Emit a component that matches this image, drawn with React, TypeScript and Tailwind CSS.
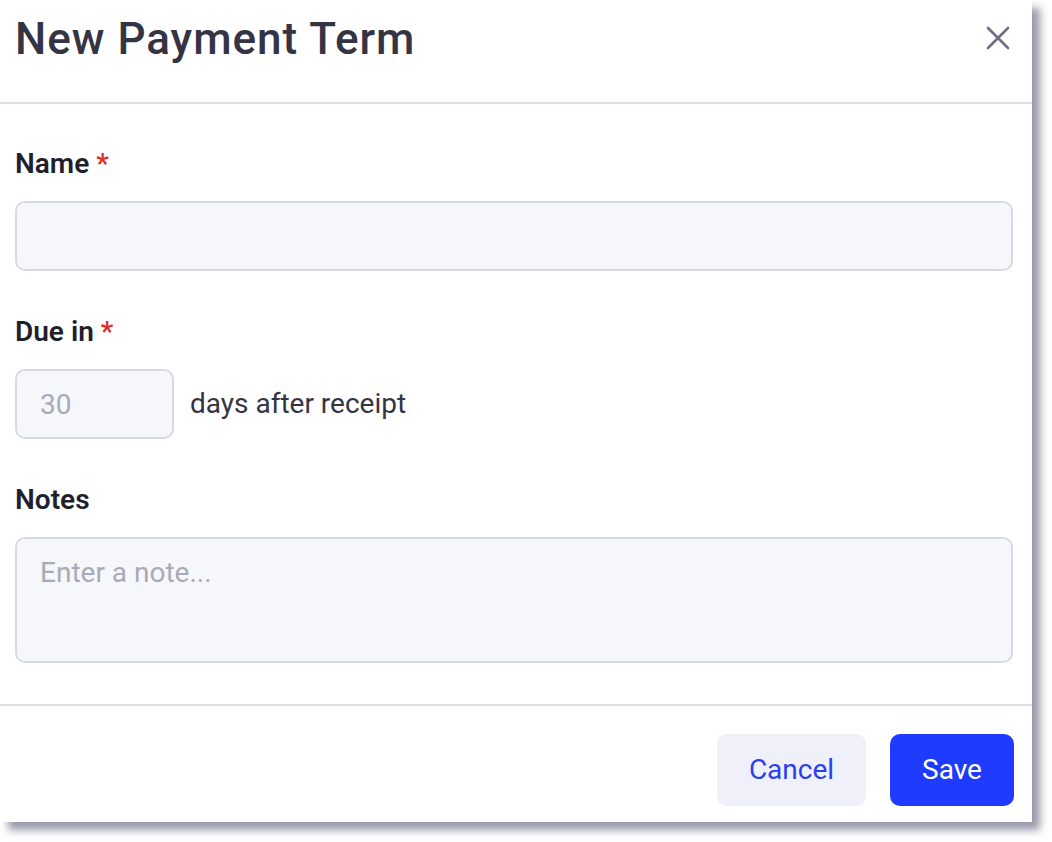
import React from "react";

export default function App() {
  return (
    <div className="w-[1052px] h-[842px] bg-white" style={{ fontFamily: "Roboto, 'Liberation Sans', sans-serif" }}>
      <div className="w-[1032px] h-[822px] bg-white flex flex-col shadow-[8px_8px_8px_rgba(70,70,100,0.55)]">
        <div className="h-[104px] shrink-0 border-b-2 border-[#dcdce6] flex justify-between pl-[15px] pr-[22px]">
          <h1 className="mt-[13px] text-[44px] leading-[52px] font-medium tracking-[1px] text-[#343445]">New Payment Term</h1>
          <button className="mt-[26px] w-[24px] h-[24px] flex items-center justify-center text-[#6e6e80]">
            <svg width="24" height="24" viewBox="0 0 24 24" fill="none" stroke="currentColor" strokeWidth="2.6" strokeLinecap="round">
              <path d="M2 2L22 22M22 2L2 22" />
            </svg>
          </button>
        </div>
        <div className="flex-1 flex flex-col pl-[15px] pr-[19px] pt-[44px]">
          <label className="text-[28px] leading-[32px] font-semibold text-[#1f1f2e]">
            Name <span className="text-[#e0302a]">*</span>
          </label>
          <input className="mt-[21px] h-[70px] w-full rounded-[10px] border-2 border-[#d9d9e5] bg-[#f6f7fb] px-[22px] text-[28px] outline-none" />
          <label className="mt-[45px] text-[28px] leading-[32px] font-semibold text-[#1f1f2e]">
            Due in <span className="text-[#e0302a]">*</span>
          </label>
          <div className="mt-[21px] flex items-center gap-[16px]">
            <input placeholder="30" className="h-[70px] w-[159px] rounded-[10px] border-2 border-[#d9d9e5] bg-[#f6f7fb] px-[23px] text-[28px] text-[#343445] placeholder:text-[#a9aab8] outline-none" />
            <span className="text-[28px] leading-[32px] text-[#343445]">days after receipt</span>
          </div>
          <label className="mt-[45px] text-[28px] leading-[32px] font-semibold text-[#1f1f2e]">Notes</label>
          <textarea placeholder="Enter a note..." className="mt-[21px] h-[126px] w-full resize-none rounded-[10px] border-2 border-[#d9d9e5] bg-[#f6f7fb] px-[23px] pt-[18px] text-[28px] leading-[32px] text-[#343445] placeholder:text-[#a9aab8] outline-none" />
        </div>
        <div className="h-[118px] shrink-0 border-t-2 border-[#dcdce6] flex justify-end items-start gap-[24px] pt-[28px] pr-[18px]">
          <button className="h-[72px] w-[149px] rounded-[10px] bg-[#f0f0fa] text-[28px] text-[#2a3ff2]">Cancel</button>
          <button className="h-[72px] w-[124px] rounded-[10px] bg-[#1f3bff] text-[28px] text-white">Save</button>
        </div>
      </div>
    </div>
  );
}
